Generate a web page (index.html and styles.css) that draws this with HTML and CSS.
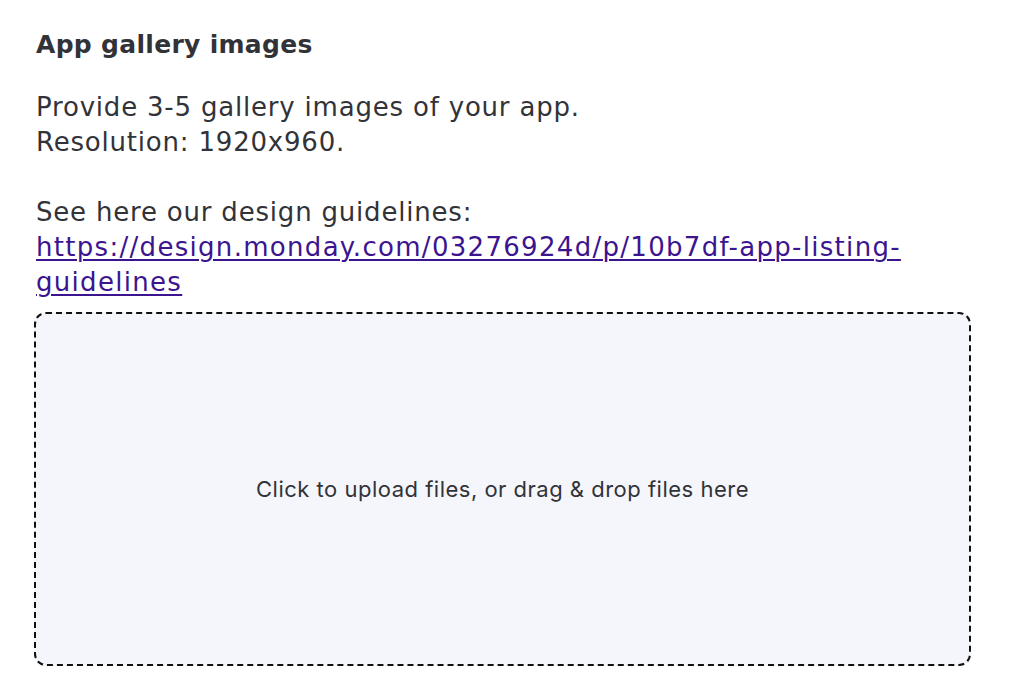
FILE: index.html
```html
<!DOCTYPE html>
<html lang="en">
<head>
<meta charset="utf-8">
<title>App gallery images</title>
<link rel="stylesheet" href="styles.css">
</head>
<body>
<main class="field">
  <h2 class="field-title">App gallery images</h2>
  <div class="field-desc">
    <p>Provide 3-5 gallery images of your app.<br>Resolution: 1920x960.</p>
    <p>See here our design guidelines:<br><a class="link" href="#">https://design.monday.com/03276924d/p/10b7df-app-listing-guidelines</a></p>
  </div>
  <div class="dropzone">
    <span class="dropzone-text">Click to upload files, or drag &amp; drop files here</span>
  </div>
</main>
</body>
</html>
```

FILE: styles.css
```css
html, body {
  margin: 0;
  padding: 0;
  background: #ffffff;
}
body {
  font-family: "DejaVu Sans", "Noto Sans", sans-serif;
  color: #323338;
}
.field {
  padding: 27px 53px 0 34px;
  display: flex;
  flex-direction: column;
}
.field-title {
  margin: 0 0 0 2px;
  font-size: 25px;
  line-height: 36px;
  font-weight: 700;
  letter-spacing: 0.3px;
  color: #323338;
}
.field-desc {
  margin: 27px 0 0 2px;
  font-size: 26px;
  line-height: 35px;
  font-weight: 400;
  letter-spacing: 0.8px;
  color: #323338;
}
.field-desc p {
  margin: 0 0 35px 0;
}
.field-desc p:last-child {
  margin-bottom: 0;
}
.link {
  color: #3c1490;
  letter-spacing: 1.3px;
  text-decoration: underline;
  text-decoration-thickness: 2px;
  text-underline-offset: 3px;
}
.dropzone {
  margin-top: 12px;
  height: 350px;
  border: 2px dashed #111111;
  border-radius: 12px;
  background: #f5f6fb;
  display: flex;
  align-items: center;
  justify-content: center;
}
.dropzone-text {
  font-family: "Inter", "Roboto", sans-serif;
  font-size: 22px;
  letter-spacing: 0.5px;
  color: #323338;
}
```
